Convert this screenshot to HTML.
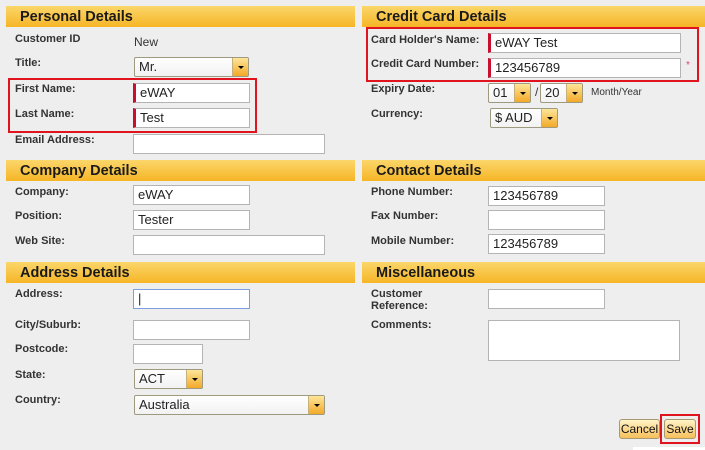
<!DOCTYPE html>
<html><head><style>
body{margin:0;width:705px;height:450px;background:#eeeeee;position:relative;overflow:hidden;font-family:"Liberation Sans",Arial,sans-serif;}
.h{position:absolute;height:21px;background:linear-gradient(#fbd66a,#f6b526);font-weight:bold;font-size:14.5px;color:#1a1a1a;line-height:22px;padding-left:14px;box-sizing:border-box;}
.l{position:absolute;font-size:11px;font-weight:bold;color:#333;}
.i{position:absolute;background:#fff;border:1px solid #b4b4b4;box-sizing:border-box;height:20px;font-size:13px;line-height:18px;padding-left:4px;color:#222;}
.i.req{border-left:3px solid #c8102e;}
.s{position:absolute;box-sizing:border-box;height:20px;border:1px solid #9e9a80;border-radius:2px;background:linear-gradient(#fff,#f2f2f2);font-size:13px;line-height:18px;padding-left:4px;color:#222;}
.s:after{content:"";position:absolute;right:0;top:0;width:15px;height:18px;background:linear-gradient(#fde59a,#f3a928);border-left:1px solid #c9b07a;}
.s:before{content:"";position:absolute;right:4px;top:8px;border-left:3px solid transparent;border-right:3px solid transparent;border-top:3px solid #000;z-index:2;}
.rb{position:absolute;border:2px solid #e0141e;box-sizing:border-box;}
.b{position:absolute;box-sizing:border-box;height:20px;border:1px solid #a89a70;border-radius:3px;background:linear-gradient(#fff3c8,#f7c05a);font-size:12px;line-height:18px;text-align:center;color:#111;}
</style></head><body>
<div class="h" style="left:6px;top:6px;width:349px">Personal Details</div>
<div class="h" style="left:362px;top:6px;width:343px">Credit Card Details</div>
<div class="h" style="left:6px;top:160px;width:349px">Company Details</div>
<div class="h" style="left:362px;top:160px;width:343px">Contact Details</div>
<div class="h" style="left:6px;top:262px;width:349px">Address Details</div>
<div class="h" style="left:362px;top:262px;width:343px">Miscellaneous</div>

<div class="l" style="left:15px;top:33px">Customer ID</div>
<div style="position:absolute;left:134px;top:35px;font-size:12px;color:#333">New</div>
<div class="l" style="left:15px;top:57px">Title:</div>
<div class="s" style="left:134px;top:57px;width:115px">Mr.</div>
<div class="rb" style="left:8px;top:78px;width:249px;height:55px"></div>
<div class="l" style="left:15px;top:83px">First Name:</div>
<div class="i req" style="left:133px;top:83px;width:117px">eWAY</div>
<div class="l" style="left:15px;top:108px">Last Name:</div>
<div class="i req" style="left:133px;top:108px;width:117px">Test</div>
<div class="l" style="left:15px;top:134px">Email Address:</div>
<div class="i" style="left:133px;top:134px;width:192px"></div>

<div class="l" style="left:15px;top:186px">Company:</div>
<div class="i" style="left:133px;top:185px;width:117px">eWAY</div>
<div class="l" style="left:15px;top:210px">Position:</div>
<div class="i" style="left:133px;top:210px;width:117px">Tester</div>
<div class="l" style="left:15px;top:235px">Web Site:</div>
<div class="i" style="left:133px;top:235px;width:192px"></div>

<div class="l" style="left:15px;top:288px">Address:</div>
<div class="i" style="left:133px;top:289px;width:117px;border-color:#7f9ee0">|</div>
<div class="l" style="left:15px;top:319px">City/Suburb:</div>
<div class="i" style="left:133px;top:320px;width:117px"></div>
<div class="l" style="left:15px;top:343px">Postcode:</div>
<div class="i" style="left:133px;top:344px;width:70px"></div>
<div class="l" style="left:15px;top:369px">State:</div>
<div class="s" style="left:134px;top:369px;width:69px">ACT</div>
<div class="l" style="left:15px;top:394px">Country:</div>
<div class="s" style="left:134px;top:395px;width:191px">Australia</div>

<div class="rb" style="left:366px;top:27px;width:333px;height:55px"></div>
<div class="l" style="left:371px;top:34px">Card Holder's Name:</div>
<div class="i req" style="left:488px;top:33px;width:193px">eWAY Test</div>
<div class="l" style="left:371px;top:58px">Credit Card Number:</div>
<div class="i req" style="left:488px;top:58px;width:193px">123456789</div>
<div style="position:absolute;left:686px;top:60px;font-size:10px;color:#e04080">*</div>
<div class="l" style="left:371px;top:83px">Expiry Date:</div>
<div class="s" style="left:488px;top:83px;width:43px">01</div>
<div style="position:absolute;left:535px;top:85px;font-size:12px;color:#333">/</div>
<div class="s" style="left:540px;top:83px;width:43px">20</div>
<div style="position:absolute;left:591px;top:87px;font-size:10px;color:#333">Month/Year</div>
<div class="l" style="left:371px;top:108px">Currency:</div>
<div class="s" style="left:490px;top:108px;width:68px">$ AUD</div>

<div class="l" style="left:371px;top:186px">Phone Number:</div>
<div class="i" style="left:488px;top:186px;width:117px">123456789</div>
<div class="l" style="left:371px;top:210px">Fax Number:</div>
<div class="i" style="left:488px;top:210px;width:117px"></div>
<div class="l" style="left:371px;top:235px">Mobile Number:</div>
<div class="i" style="left:488px;top:234px;width:117px">123456789</div>

<div class="l" style="left:371px;top:288px;line-height:12px">Customer<br>Reference:</div>
<div class="i" style="left:488px;top:289px;width:117px"></div>
<div class="l" style="left:371px;top:319px">Comments:</div>
<div class="i" style="left:488px;top:320px;width:192px;height:41px"></div>

<div class="b" style="left:619px;top:419px;width:41px">Cancel</div>
<div class="b" style="left:664px;top:419px;width:32px">Save</div>
<div class="rb" style="left:660px;top:414px;width:40px;height:30px"></div>
<div style="position:absolute;left:633px;top:447px;width:72px;height:3px;background:#fff"></div>
</body></html>
